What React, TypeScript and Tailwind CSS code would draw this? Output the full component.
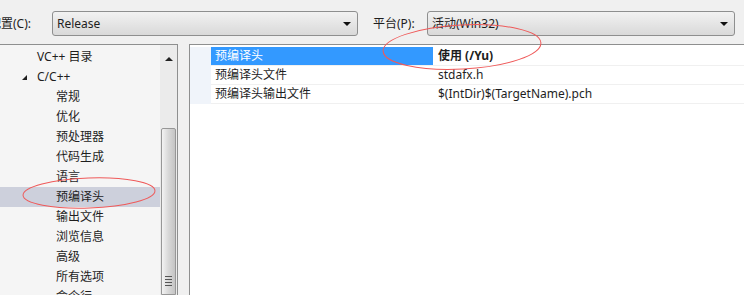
import React from 'react';

const font = { fontFamily: '"Noto Sans", "Noto Sans CJK SC", sans-serif' };

function Combo({ value, width }: { value: string; width: string }) {
  return (
    <div className={`relative h-[25px] ${width} rounded-[3px] border border-[#8e8f8f] bg-gradient-to-b from-[#f2f2f2] to-[#d9d9d9] flex items-center`}>
      <span className="pl-[4px] text-[12px] text-[#1e1e1e]">{value}</span>
      <span className="absolute right-[6px] top-[10px] w-0 h-0 border-l-[4px] border-r-[4px] border-t-[4px] border-l-transparent border-r-transparent border-t-[#111]" />
    </div>
  );
}

const tree = [
  { label: 'VC++ 目录', indent: 'pl-[37px]' },
  { label: 'C/C++', indent: 'pl-[37px]', open: true },
  { label: '常规', indent: 'pl-[56px]' },
  { label: '优化', indent: 'pl-[56px]' },
  { label: '预处理器', indent: 'pl-[56px]' },
  { label: '代码生成', indent: 'pl-[56px]' },
  { label: '语言', indent: 'pl-[56px]' },
  { label: '预编译头', indent: 'pl-[56px]', selected: true },
  { label: '输出文件', indent: 'pl-[56px]' },
  { label: '浏览信息', indent: 'pl-[56px]' },
  { label: '高级', indent: 'pl-[56px]' },
  { label: '所有选项', indent: 'pl-[56px]' },
  { label: '命令行', indent: 'pl-[56px]' },
];

const props = [
  { name: '预编译头', value: '使用 (/Yu)', selected: true },
  { name: '预编译头文件', value: 'stdafx.h' },
  { name: '预编译头输出文件', value: '$(IntDir)$(TargetName).pch' },
];

export default function App() {
  return (
    <div className="relative w-[744px] h-[295px] overflow-hidden bg-[#f0f0f0] text-[12px] text-[#1e1e1e]" style={font}>
      {/* top bar */}
      <div className="h-[44px] flex items-center pt-[3px]">
        <span className="ml-[-11px] w-[63px]">配置(C):</span>
        <Combo value="Release" width="w-[306px]" />
        <span className="ml-[15px] w-[54px]">平台(P):</span>
        <Combo value="活动(Win32)" width="w-[308px]" />
      </div>

      <div className="flex h-[251px]">
        {/* tree */}
        <div className="w-[178px] h-full border-t border-r border-[#8e8f8f] bg-[#f5f5f5] flex">
          <div className="flex-1 pt-[2px]">
            {tree.map((t) => (
              <div key={t.label} className={`relative h-[20px] flex items-center ${t.indent} ${t.selected ? 'bg-[#cdd0dc]' : ''}`}>
                {t.open && (
                  <span className="absolute left-[22px] top-[8px] w-0 h-0 border-l-[5px] border-b-[5px] border-l-transparent border-b-[#1e1e1e]" />
                )}
                <span>{t.label}</span>
              </div>
            ))}
          </div>
          {/* scrollbar */}
          <div className="w-[17px] h-full bg-[#ebebeb] flex flex-col items-center">
            <div className="h-[16px] mt-[6px] flex items-center">
              <span className="w-0 h-0 border-l-[4px] border-r-[4px] border-b-[4px] border-l-transparent border-r-transparent border-b-[#222]" />
            </div>
            <div className="mt-[61px] w-[15px] flex-1 rounded-t-[2px] border border-[#979797] bg-gradient-to-r from-[#f3f3f3] via-[#d8d8d8] to-[#c4c4c4] flex flex-col items-center justify-end pb-[8px] gap-[2px]">
              <span className="w-[7px] h-[1px] bg-[#555]" />
              <span className="w-[7px] h-[1px] bg-[#555]" />
              <span className="w-[7px] h-[1px] bg-[#555]" />
              <span className="w-[7px] h-[1px] bg-[#555]" />
            </div>
          </div>
        </div>

        {/* property grid */}
        <div className="ml-[11px] flex-1 h-full border-t border-l border-[#8e8f8f] bg-white pt-[2px]">
          {props.map((p) => (
            <div key={p.name} className="flex h-[19px]">
              <div className="w-[21px] bg-[#f0f4fa]" />
              <div className={`w-[222px] flex items-center pl-[4px] border-b border-[#f0f0f0] ${p.selected ? 'bg-[#3399ff] text-white' : ''}`}>{p.name}</div>
              <div className={`flex-1 flex items-center pl-[5px] border-b border-[#f0f0f0] ${p.selected ? 'font-bold' : ''}`}>{p.value}</div>
            </div>
          ))}
        </div>
      </div>

      {/* red annotation ellipses */}
      <svg className="absolute inset-0 pointer-events-none" width="744" height="295">
        <ellipse cx="462" cy="47" rx="79" ry="22" transform="rotate(-3 462 47)" fill="none" stroke="#ef5a5a" strokeWidth="1" />
        <ellipse cx="89" cy="193" rx="66" ry="15" transform="rotate(-2 89 193)" fill="none" stroke="#ef5a5a" strokeWidth="1" />
      </svg>
    </div>
  );
}
